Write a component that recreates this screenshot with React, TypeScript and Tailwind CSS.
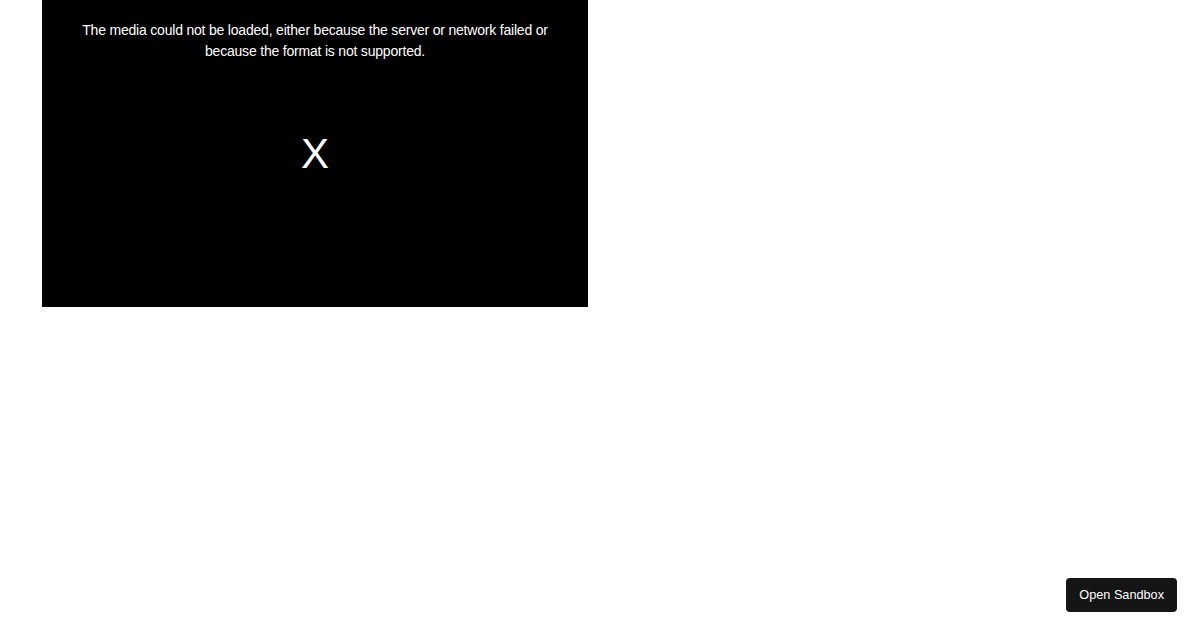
export default function App() {
  return (
    <div className="relative w-[1200px] h-[630px] bg-white overflow-hidden" style={{ fontFamily: '"Liberation Sans", Arial, sans-serif' }}>
      <div className="ml-[42px] w-[546px] h-[307px] bg-black flex flex-col items-center">
        <p className="mt-[20px] px-[30px] text-center text-white text-[14px] tracking-[-0.2px] leading-[21px]">
          The media could not be loaded, either because the server or network failed or because the format is not supported.
        </p>
        <div className="mt-[71px] text-white text-[42px] leading-[42px]">X</div>
      </div>
      <button className="absolute right-[23px] bottom-[18px] h-[34px] px-[13px] pt-px rounded-[4px] bg-[#151515] text-white text-[12.7px]">
        Open Sandbox
      </button>
    </div>
  );
}
